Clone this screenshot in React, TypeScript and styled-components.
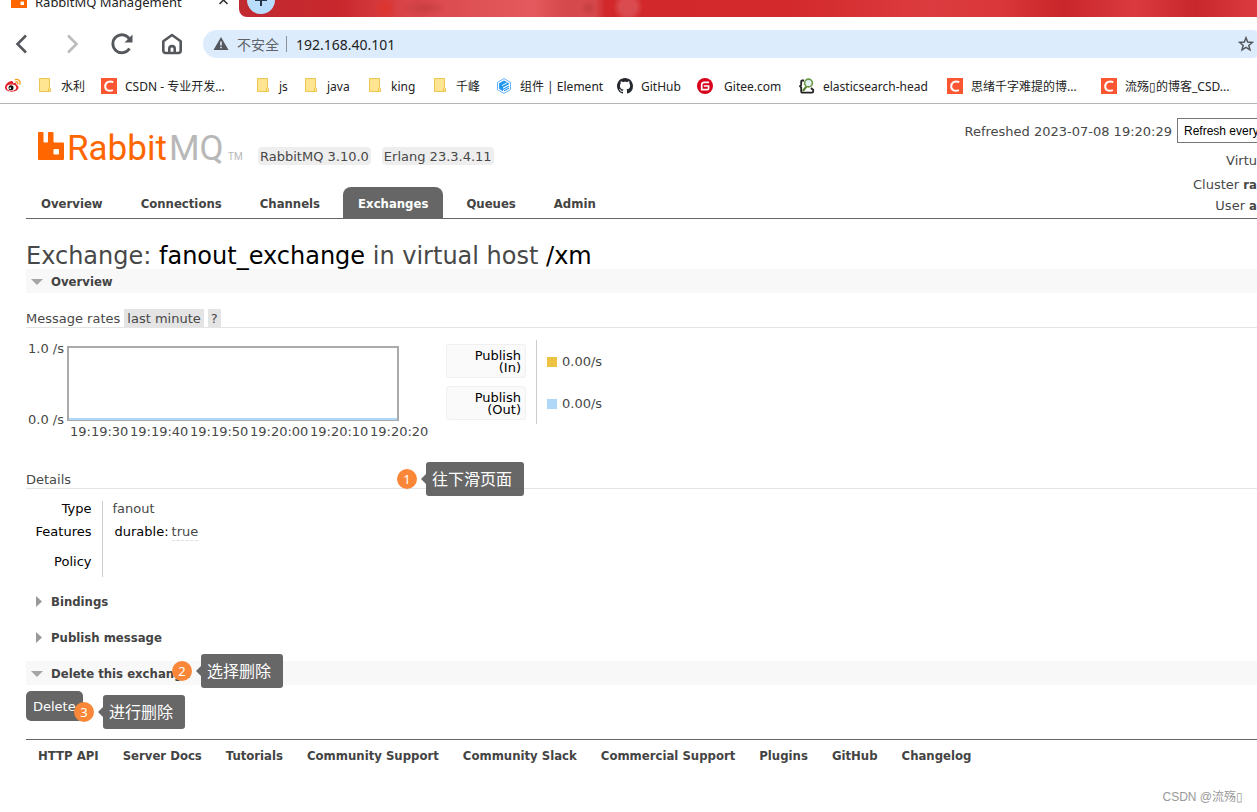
import React from "react";
import styled, { createGlobalStyle } from "styled-components";

const GlobalStyle = createGlobalStyle`
  *, *::before, *::after { box-sizing: border-box; }
  body { margin: 0; background: #fff; overflow-x: hidden; }
  a { color: inherit; text-decoration: none; }
  h1, h2, h3, p, ul { margin: 0; padding: 0; }
  ul { list-style: none; }
  button { font: inherit; cursor: pointer; }
`;

const uiFont = `"Noto Sans", "Noto Sans CJK SC", sans-serif`;
const pageFont = `Verdana, "DejaVu Sans", "Noto Sans CJK SC", sans-serif`;
const boldFont = `"DejaVu Sans Condensed", "DejaVu Sans", sans-serif`;

/* ---------- browser chrome ---------- */

const Browser = styled.div`
  overflow: hidden;
  font-family: ${uiFont};
`;

const TabStrip = styled.div`
  display: flex;
  height: 17px;
  overflow: hidden;
`;

const ActiveTab = styled.div`
  display: flex;
  flex: 0 0 239px;
  align-items: flex-end;
  gap: 8px;
  padding: 0 10px 9px 11px;
  color: #222;
  font-size: 13px;
  line-height: 12px;
`;

const TabTitle = styled.span`
  flex: 1;
`;

const TabClose = styled.button`
  display: flex;
  padding: 0;
  border: 0;
  background: none;
`;

const ThemeStrip = styled.div`
  display: flex;
  flex: 1;
  align-items: flex-end;
  padding: 0 8px 3px;
  border-bottom-left-radius: 8px;
  background:
    radial-gradient(circle at 389px 7px, #da4b4f 8px, transparent 15px),
    radial-gradient(circle at 146px 8px, #dc3632 5px, transparent 12px),
    radial-gradient(ellipse 22px 9px at 185px 8px, #b8363b88, transparent),
    radial-gradient(ellipse 8px 8px at 350px 8px, #b8363b88, transparent),
    linear-gradient(
      90deg,
      #c02a31 0%,
      #c9282d 10%,
      #d2363a 13%,
      #d84347 16%,
      #de5155 23%,
      #e4595d 29%,
      #d5484b 32%,
      #d5484b 35%,
      #d2282b 36%,
      #d3292c 54%,
      #dc3c3f 68%,
      #d93639 75%,
      #c8262a 81%,
      #db3a3e 88%,
      #c8272b 94%,
      #dc3c40 100%
    );
`;

const NewTab = styled.button`
  display: flex;
  flex: none;
  align-items: center;
  justify-content: center;
  width: 28px;
  height: 28px;
  padding: 0;
  border: 0;
  border-radius: 50%;
  background: #badcfd;
`;

const Toolbar = styled.div`
  display: flex;
  align-items: center;
  height: 54px;
  padding-left: 11px;
`;

const NavButtons = styled.div`
  display: flex;
  gap: 28px;
  margin-right: 20px;
`;

const IconButton = styled.button`
  display: flex;
  padding: 0;
  border: 0;
  background: none;
`;

const AddressBar = styled.div`
  display: flex;
  flex: 1;
  align-items: center;
  height: 28px;
  margin-right: -8px;
  padding: 0 11px 0 10px;
  border-radius: 14px;
  background: #dcecfd;
`;

const Insecure = styled.span`
  height: 16px;
  padding: 0 7px 0 8px;
  border-right: 1px solid #8a9199;
  color: #5f6368;
  font-size: 14px;
  line-height: 18px;
`;

const AddressInput = styled.input`
  flex: 1;
  min-width: 0;
  padding: 2px 0 0 9px;
  border: 0;
  outline: 0;
  background: none;
  color: #222;
  font: 14px/20px ${uiFont};
`;

const BookmarkBar = styled.ul`
  display: flex;
  gap: 16px;
  height: 33px;
  padding: 0 5px 3px;
  border-bottom: 1px solid #b4b4b4;
`;

const Bookmark = styled.li<{ $width: number }>`
  flex: 0 0 ${(p) => p.$width}px;
  min-width: 0;
`;

const BookmarkLink = styled.a`
  display: flex;
  align-items: center;
  gap: 8px;
  height: 29px;
  color: #222;
  font-size: 12px;
  line-height: 18px;
  white-space: nowrap;

  svg { flex: none; }
`;

const BookmarkName = styled.span`
  padding-top: 2px;
`;

/* ---------- management page ---------- */

const Page = styled.div`
  position: relative;
  overflow: hidden;
  padding-left: 26px;
  color: #484848;
  font: 13px/16px ${pageFont};
`;

const Header = styled.header`
  display: flex;
  justify-content: space-between;
  height: 115px;
  border-bottom: 1px solid #666;
`;

const Masthead = styled.div`
  display: flex;
  flex-direction: column;
  justify-content: space-between;
`;

const Brand = styled.div`
  display: flex;
  align-items: flex-end;
  gap: 11px;
  height: 61px;
  padding-left: 12px;
`;

const LogoLink = styled.a`
  display: flex;
  width: 209px;
  height: 38px;
`;

const Version = styled.span`
  padding: 2px 2px 0;
  border-radius: 4px;
  background: #eee;
`;

const Tabs = styled.nav`
  display: flex;
  gap: 8px;
`;

const Tab = styled.a<{ $active?: boolean }>`
  height: 31px;
  padding: 9px 15px 0;
  border-radius: 8px 8px 0 0;
  background: ${(p) => (p.$active ? "#666" : "transparent")};
  color: ${(p) => (p.$active ? "#fff" : "#444")};
  font-family: ${boldFont};
  font-weight: bold;
`;

const Status = styled.div`
  display: flex;
  flex-direction: column;
  align-items: flex-end;
  padding-top: 14px;

  b { font-family: ${boldFont}; }
`;

const RefreshLine = styled.label`
  display: flex;
  gap: 5px;
  height: 25px;
  margin-bottom: 10px;
  line-height: 27px;
`;

const RefreshSelect = styled.select`
  appearance: none;
  width: 80px;
  height: 25px;
  padding: 0 0 0 6px;
  border: 1px solid #767676;
  border-right: 0;
  background: #fff;
  color: #000;
  font: 12px "Liberation Sans", Arial, sans-serif;
`;

const StatusLine = styled.p<{ $gap?: number }>`
  margin-bottom: ${(p) => p.$gap || 0}px;
`;

const Title = styled.h1`
  padding-top: 24px;
  font-size: 24px;
  font-weight: normal;
  line-height: 26px;
`;

const TitleName = styled.span`
  color: #000;
`;

const Section = styled.h2<{ $open?: boolean }>`
  margin-bottom: ${(p) => (p.$open ? 0 : 12)}px;
  background: ${(p) => (p.$open ? "#f8f8f8" : "transparent")};
  font-size: 13px;
`;

const SectionToggle = styled.button`
  display: flex;
  align-items: center;
  gap: 8px;
  width: 100%;
  height: 24px;
  padding: 2px 0 0 5px;
  border: 0;
  background: none;
  color: #444;
  font-family: ${boldFont};
  font-weight: bold;
`;

const SubHeading = styled.h3`
  display: flex;
  gap: 4px;
  height: 19px;
  border-bottom: 1px solid #e4e4e4;
  font-size: 13px;
  font-weight: normal;
  line-height: 20px;
`;

const Chip = styled.button`
  height: 18px;
  padding: 2px 3px 0;
  border: 0;
  background: #e4e4e4;
  color: #484848;
  line-height: 16px;
`;

const RatesBlock = styled.section`
  padding-top: 16px;
`;

const RatesRow = styled.div`
  display: flex;
  align-items: flex-start;
  gap: 19px;
  padding-top: 12px;
`;

const Chart = styled.figure`
  display: grid;
  grid-template-columns: 38px 332px;
  column-gap: 3px;
  width: 401px;
  margin: 0;
  padding-top: 6px;
`;

const YAxis = styled.div`
  display: flex;
  flex-direction: column;
  justify-content: space-between;
  height: 87px;
  margin: -5px 0 -7px;
  text-align: right;
`;

const Plot = styled.div`
  height: 75px;
  border: 2px solid #aaa;
  border-bottom-width: 1px;
  box-shadow: inset 0 -2px 0 #afd8f8;
`;

const XAxis = styled.div`
  display: grid;
  grid-column: 2;
  grid-template-columns: repeat(6, 60px);
  width: 360px;
  padding: 3px 0 0 3px;
  white-space: nowrap;
`;

const RatesTable = styled.table`
  border-collapse: collapse;
`;

const RateName = styled.th`
  height: 42px;
  padding: 0 10px 0 0;
  border-right: 1px solid #ccc;
  font-weight: normal;
`;

const RateButton = styled.button`
  display: block;
  width: 80px;
  height: 34px;
  padding: 2px 4px 0 24px;
  border: 1px solid #f0f0f0;
  border-radius: 3px;
  background: #fafafa;
  color: #000;
  line-height: 12px;
  text-align: right;
`;

const RateValue = styled.td`
  padding: 2px 0 0 10px;
`;

const RateReading = styled.span`
  display: flex;
  align-items: center;
  gap: 5px;
`;

const Swatch = styled.i<{ $color: string }>`
  width: 10px;
  height: 10px;
  background: ${(p) => p.$color};
`;

const DetailsBlock = styled.section`
  padding: 30px 0 12px;
`;

const DetailsTable = styled.table`
  margin-top: 12px;
  border-collapse: collapse;
`;

const DetailName = styled.th`
  width: 76px;
  padding: 0 10px 0 0;
  border-right: 1px solid #ccc;
  color: #000;
  font-weight: normal;
  text-align: right;
`;

const DetailValue = styled.td<{ $height: number }>`
  height: ${(p) => p.$height}px;
  padding: 0 0 0 10px;
`;

const Feature = styled.span`
  display: flex;
  gap: 3px;
  padding-left: 2px;
`;

const FeatureName = styled.span`
  color: #000;
`;

const FeatureValue = styled.abbr`
  border-bottom: 1px dashed #ddd;
`;

const DeleteButton = styled.button`
  height: 30px;
  margin: 6px 0 18px;
  padding: 2px 7px 0;
  border: 0;
  border-radius: 5px;
  background: #666;
  color: #fff;
`;

const Footer = styled.footer`
  display: flex;
  gap: 24px;
  padding: 8px 12px 0;
  border-top: 1px solid #666;
  color: #444;
  font-family: ${boldFont};
  font-weight: bold;
`;

const Credit = styled.p`
  padding: 25px 14px 0 0;
  color: #999;
  font-family: "Liberation Sans", "Noto Sans CJK SC", sans-serif;
  font-size: 12px;
  text-align: right;
`;

/* Numbered callouts lie over the page content. */
const Callout = styled.div<{ $x: number; $y: number }>`
  position: absolute;
  left: ${(p) => p.$x}px;
  top: ${(p) => p.$y}px;
  display: flex;
  align-items: center;
  font-family: "Noto Sans", "Noto Sans CJK SC", sans-serif;
`;

const CalloutNumber = styled.span`
  width: 20px;
  height: 20px;
  margin-right: 4px;
  border-radius: 50%;
  background: #fa8737;
  color: #fff;
  font-size: 13px;
  line-height: 20px;
  text-align: center;
`;

const CalloutArrow = styled.span`
  border: 5px solid transparent;
  border-left: 0;
  border-right-color: rgba(82, 82, 82, 0.88);
`;

const CalloutText = styled.span`
  height: 34px;
  padding: 0 12px 0 6px;
  border-radius: 3px;
  background: rgba(82, 82, 82, 0.88);
  color: #fff;
  font-size: 16px;
  line-height: 34px;
`;

/* ---------- drawings ---------- */

const RabbitMark = () => (
  <svg width="16" height="16" viewBox="0 0 16 16">
    <path fill="#f60" d="M0 1q0-1 1-1h2q1 0 1 1v5h3V1q0-1 1-1h2q1 0 1 1v5h4q1 0 1 1v9H0z" />
    <rect x="9.500" y="9.500" width="3.500" height="3.500" rx=".6" fill="#fff" />
  </svg>
);

const Logo = () => (
  <svg width="209" height="38" viewBox="0 0 209 38" role="img" aria-label="RabbitMQ">
    <path
      fill="#f60"
      d="M0 6q0-1 1-1h3.500q1 0 1 1v8.500q0 1 1 1H9q1 0 1-1V6q0-1 1-1h3.500q1 0 1 1v8.500q0 1 1 1H25q1 0 1 1V32q0 1-1 1H1q-1 0-1-1z"
    />
    <rect x="15.500" y="22" width="5.500" height="5.500" rx="1.200" fill="#fff" />
    <g fontFamily="Roboto, sans-serif">
      <text x="29" y="33" fontSize="35" fill="#f60">Rabbit</text>
      <text x="131" y="33" fontSize="35" fill="#b8b8b8">MQ</text>
      <text x="190" y="33" fontSize="10" fill="#b8b8b8">TM</text>
    </g>
  </svg>
);

const Weibo = () => (
  <svg width="16" height="16" viewBox="0 0 16 16">
    <path fill="#e3262d" d="M6 3C2.500 4 0 7 0 9.500 0 12 3 13.700 6.800 13.700c4 0 6.700-2 6.700-4.200 0-1.500-1-2.200-2-2.500.5-1.700-.8-2.500-3.300-1.500C8.500 3.800 7.700 2.700 6 3z" />
    <ellipse cx="6.500" cy="9.600" rx="4.700" ry="3.200" fill="#fff" />
    <circle cx="6" cy="9.700" r="2.500" fill="#111" />
    <circle cx="5.200" cy="10.200" r=".9" fill="#fff" />
    <path fill="none" stroke="#f59a23" strokeWidth="1.300" strokeLinecap="round" d="M10.500 1.500c3-.7 5.300 1.700 4.400 4.700M10.700 3.800c1.600-.3 2.500.8 2.100 2.200" />
  </svg>
);

const Folder = () => (
  <svg width="16" height="16" viewBox="0 0 16 16">
    <path fill="#ffe591" stroke="#eac54f" d="M2.500 .5h10v9l1 1v3h-11z" />
    <path fill="none" stroke="#eac54f" d="M11.500 13.500v-3l1-1" />
  </svg>
);

const Csdn = () => (
  <svg width="16" height="16" viewBox="0 0 16 16">
    <rect width="16" height="16" fill="#fc5531" />
    <path fill="none" stroke="#fff" strokeWidth="2" d="M12.300 4.200C9 2.700 4.500 3.400 4.200 8.100c-.2 4.600 4 5.400 7.700 4" />
  </svg>
);

const ElementMark = () => (
  <svg width="16" height="16" viewBox="0 0 16 16">
    <path fill="#fff" stroke="#66b1ff" d="M8 .6l6.500 3.700v7.400L8 15.400l-6.500-3.700V4.300z" />
    <path fill="#2196f3" d="M8 2.400l4.900 2.800v1L7 9.500v1.200l5.900-3.300v1.400L7 12.100v1.100L3.100 10.800V5.200z" />
    <path fill="#2196f3" d="M12.900 9.500v1.300L8 13.600v-1.300z" />
    <path stroke="#fff" d="M6 7.600l5-2.800" />
  </svg>
);

const GitHubMark = () => (
  <svg width="16" height="16" viewBox="0 0 16 16">
    <path
      fill="#24292f"
      d="M8 0C3.580 0 0 3.580 0 8c0 3.540 2.290 6.530 5.470 7.590.4.070.55-.17.55-.38 0-.19-.01-.82-.01-1.490-2.010.37-2.530-.49-2.690-.94-.09-.23-.48-.94-.82-1.130-.28-.15-.68-.52-.01-.53.63-.01 1.080.58 1.230.82.72 1.210 1.870.87 2.330.66.07-.52.28-.87.51-1.070-1.780-.2-3.640-.89-3.640-3.950 0-.87.31-1.590.82-2.150-.08-.2-.36-1.020.08-2.120 0 0 .67-.21 2.200.82.64-.18 1.320-.27 2-.27s1.360.09 2 .27c1.530-1.040 2.200-.82 2.200-.82.44 1.100.16 1.920.08 2.120.51.56.82 1.270.82 2.150 0 3.070-1.870 3.750-3.650 3.950.29.25.54.73.54 1.480 0 1.070-.01 1.930-.01 2.200 0 .21.15.46.55.38A8.010 8.010 0 0 0 16 8c0-4.420-3.580-8-8-8z"
    />
  </svg>
);

const Gitee = () => (
  <svg width="16" height="16" viewBox="0 0 16 16">
    <circle cx="8" cy="8" r="8" fill="#d8001b" />
    <path fill="none" stroke="#fff" strokeWidth="1.700" d="M12.200 4.400H7q-2.300 0-2.300 2.400v4.800H10q1.600 0 1.600-1.700V8H6.800" />
  </svg>
);

const ElasticHead = () => (
  <svg width="16" height="16" viewBox="0 0 16 16">
    <path fill="none" stroke="#222" strokeWidth="1.800" d="M5 2.500H3.200q-1 0-1 1V7L1 8.200l1.200 1.200v4q0 1.300 1.300 1.300h9.500q1.200 0 1.200-1.200V12L12 10" />
    <path stroke="#557f35" strokeWidth="2" d="M7.500 8.500L3.800 13" />
    <circle cx="9.500" cy="5" r="3.900" fill="#e3f1f7" stroke="#6b9a45" strokeWidth="1.600" />
  </svg>
);

const Triangle = ({ open }: { open?: boolean }) => (
  <svg width="12" height="12" viewBox="0 0 12 12">
    <path fill={open ? "#a5a5a5" : "#999"} d={open ? "M0 3h12L6 9z" : "M5 0l6 5.500-6 5.500z"} />
  </svg>
);

const icons = {
  weibo: Weibo,
  folder: Folder,
  csdn: Csdn,
  element: ElementMark,
  github: GitHubMark,
  gitee: Gitee,
  elastic: ElasticHead,
};

const bookmarks: { icon: keyof typeof icons; text: string; width: number }[] = [
  { icon: "weibo", text: "", width: 16 },
  { icon: "folder", text: "水利", width: 48 },
  { icon: "csdn", text: "CSDN - 专业开发...", width: 138 },
  { icon: "folder", text: "js", width: 32 },
  { icon: "folder", text: "java", width: 48 },
  { icon: "folder", text: "king", width: 49 },
  { icon: "folder", text: "千峰", width: 48 },
  { icon: "element", text: "组件 | Element", width: 105 },
  { icon: "github", text: "GitHub", width: 64 },
  { icon: "gitee", text: "\u00a0Gitee.com", width: 86 },
  { icon: "elastic", text: "elasticsearch-head", width: 132 },
  { icon: "csdn", text: "思绪千字难提的博...", width: 138 },
  { icon: "csdn", text: "流殇▯的博客_CSD...", width: 138 },
];

const tabs = ["Overview", "Connections", "Channels", "Exchanges", "Queues", "Admin"];
const times = ["19:19:30", "19:19:40", "19:19:50", "19:20:00", "19:20:10", "19:20:20"];
const rates = [
  { name: "Publish (In)", color: "#edc240", value: "0.00/s" },
  { name: "Publish (Out)", color: "#afd8f8", value: "0.00/s" },
];
const footerLinks = [
  "HTTP API",
  "Server Docs",
  "Tutorials",
  "Community Support",
  "Community Slack",
  "Commercial Support",
  "Plugins",
  "GitHub",
  "Changelog",
];
const callouts = [
  { x: 397, y: 358, text: "往下滑页面" },
  { x: 172, y: 550, text: "选择删除" },
  { x: 74, y: 591, text: "进行删除" },
];

const SectionHeading = ({ title, open }: { title: string; open?: boolean }) => (
  <Section $open={open}>
    <SectionToggle aria-expanded={!!open}>
      <Triangle open={open} />
      {title}
    </SectionToggle>
  </Section>
);

const BrowserChrome = () => (
  <Browser>
    <TabStrip>
      <ActiveTab>
        <RabbitMark />
        <TabTitle>RabbitMQ Management</TabTitle>
        <TabClose aria-label="Close tab">
          <svg width="11" height="11" viewBox="0 0 11 11" stroke="#333" strokeWidth="1.600">
            <path d="M1.500 -1l8 8M9.500 -1l-8 8" />
          </svg>
        </TabClose>
      </ActiveTab>
      <ThemeStrip>
        <NewTab aria-label="New tab">
          <svg width="14" height="14" viewBox="0 0 14 14" stroke="#23364a" strokeWidth="2">
            <path d="M7 1v12M1 7h12" />
          </svg>
        </NewTab>
      </ThemeStrip>
    </TabStrip>
    <Toolbar>
      <NavButtons>
        <IconButton aria-label="Back">
          <svg width="22" height="22" viewBox="0 0 22 22" fill="none" stroke="#54585d" strokeWidth="2.600">
            <path d="M15 2.500L6.500 11l8.500 8.500" />
          </svg>
        </IconButton>
        <IconButton aria-label="Forward">
          <svg width="22" height="22" viewBox="0 0 22 22" fill="none" stroke="#bcbcbc" strokeWidth="2.600">
            <path d="M7 2.500l8.500 8.500L7 19.500" />
          </svg>
        </IconButton>
        <IconButton aria-label="Reload">
          <svg width="22" height="22" viewBox="0 0 22 22" fill="none" stroke="#54585d" strokeWidth="2.800">
            <path d="M18.500 15.500A9 9 0 1 1 18.500 6" />
            <path fill="#54585d" stroke="none" d="M21.500 1.500v8h-8z" />
          </svg>
        </IconButton>
        <IconButton aria-label="Home">
          <svg width="22" height="22" viewBox="0 0 22 22" fill="none" stroke="#54585d" strokeWidth="2.600" strokeLinejoin="round">
            <path d="M2.300 8.200L11 2l8.700 6.200v9.300q0 2.500-2.500 2.500H4.800q-2.500 0-2.500-2.500z" />
            <path d="M8.300 19.500v-3.700a2.700 2.700 0 0 1 5.400 0v3.700" />
          </svg>
        </IconButton>
      </NavButtons>
      <AddressBar>
        <svg width="16" height="16" viewBox="0 0 16 16">
          <path fill="#54585d" d="M8 1l7.500 13H.5z" />
          <path stroke="#dcecfd" strokeWidth="1.600" d="M8 5.500v4M8 10.700v1.600" />
        </svg>
        <Insecure>不安全</Insecure>
        <AddressInput aria-label="Address" defaultValue="192.168.40.101" />
        <IconButton aria-label="Bookmark this page">
          <svg width="16" height="16" viewBox="0 0 16 16" fill="none" stroke="#54585d" strokeWidth="1.500">
            <path d="M8 1.800l1.700 4.300 4.700.3-3.600 3 1.200 4.500L8 11.400l-4 2.500 1.200-4.500-3.600-3 4.700-.3z" />
          </svg>
        </IconButton>
      </AddressBar>
    </Toolbar>
    <BookmarkBar>
      {bookmarks.map(({ icon, text, width }, i) => {
        const Icon = icons[icon];
        return (
          <Bookmark key={i} $width={width}>
            <BookmarkLink href="#" aria-label={text || "Weibo"}>
              <Icon />
              <BookmarkName>{text}</BookmarkName>
            </BookmarkLink>
          </Bookmark>
        );
      })}
    </BookmarkBar>
  </Browser>
);

export default function App() {
  return (
    <>
      <GlobalStyle />
      <BrowserChrome />
      <Page>
        <Header>
          <Masthead>
            <Brand>
              <LogoLink href="#"><Logo /></LogoLink>
              <Version>RabbitMQ 3.10.0</Version>
              <Version>Erlang 23.3.4.11</Version>
            </Brand>
            <Tabs>
              {tabs.map((t) => (
                <Tab key={t} href="#" $active={t === "Exchanges"}>{t}</Tab>
              ))}
            </Tabs>
          </Masthead>
          <Status>
            <RefreshLine>
              Refreshed 2023-07-08 19:20:29
              <RefreshSelect>
                <option>Refresh every</option>
              </RefreshSelect>
            </RefreshLine>
            <StatusLine $gap={8}>Virtu</StatusLine>
            <StatusLine $gap={5}>Cluster <b>ra</b></StatusLine>
            <StatusLine>User <b>a</b></StatusLine>
          </Status>
        </Header>
        <main>
          <Title>
            Exchange: <TitleName>fanout_exchange</TitleName> in virtual host <TitleName>/xm</TitleName>
          </Title>
          <SectionHeading title="Overview" open />
          <RatesBlock>
            <SubHeading>
              Message rates <Chip>last minute</Chip> <Chip>?</Chip>
            </SubHeading>
            <RatesRow>
              <Chart>
                <YAxis>
                  <span>1.0 /s</span>
                  <span>0.0 /s</span>
                </YAxis>
                <Plot />
                <XAxis>
                  {times.map((t) => <span key={t}>{t}</span>)}
                </XAxis>
              </Chart>
              <RatesTable>
                <tbody>
                  {rates.map((r) => (
                    <tr key={r.name}>
                      <RateName scope="row"><RateButton>{r.name}</RateButton></RateName>
                      <RateValue>
                        <RateReading><Swatch $color={r.color} />{r.value}</RateReading>
                      </RateValue>
                    </tr>
                  ))}
                </tbody>
              </RatesTable>
            </RatesRow>
          </RatesBlock>
          <DetailsBlock>
            <SubHeading>Details</SubHeading>
            <DetailsTable>
              <tbody>
                <tr>
                  <DetailName scope="row">Type</DetailName>
                  <DetailValue $height={16}>fanout</DetailValue>
                </tr>
                <tr>
                  <DetailName scope="row">Features</DetailName>
                  <DetailValue $height={30}>
                    <Feature>
                      <FeatureName>durable:</FeatureName>
                      <FeatureValue>true</FeatureValue>
                    </Feature>
                  </DetailValue>
                </tr>
                <tr>
                  <DetailName scope="row">Policy</DetailName>
                  <DetailValue $height={30} />
                </tr>
              </tbody>
            </DetailsTable>
          </DetailsBlock>
          <SectionHeading title="Bindings" />
          <SectionHeading title="Publish message" />
          <SectionHeading title="Delete this exchange" open />
          <DeleteButton>Delete</DeleteButton>
        </main>
        <Footer>
          {footerLinks.map((t) => <a key={t} href="#">{t}</a>)}
        </Footer>
        <Credit>CSDN @流殇▯</Credit>
        {callouts.map((c, i) => (
          <Callout key={c.text} $x={c.x} $y={c.y}>
            <CalloutNumber>{i + 1}</CalloutNumber>
            <CalloutArrow />
            <CalloutText>{c.text}</CalloutText>
          </Callout>
        ))}
      </Page>
    </>
  );
}
